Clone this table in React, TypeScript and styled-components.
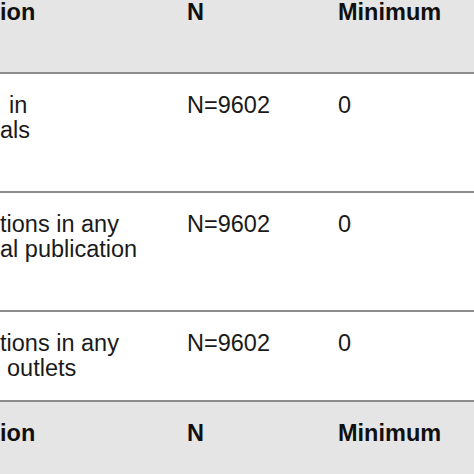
import React from 'react';
import styled, { createGlobalStyle } from 'styled-components';

const GlobalStyle = createGlobalStyle`
  html, body {
    margin: 0;
    padding: 0;
    background: #ffffff;
    overflow: hidden;
  }

  body {
    font-family: 'Liberation Sans', Arial, sans-serif;
    color: #141414;
  }
`;

const Table = styled.div`
  width: 474px;
  height: 474px;
  display: flex;
  flex-direction: column;
  overflow: hidden;
`;

const Row = styled.div<{ $head?: boolean; $height: number }>`
  display: grid;
  grid-template-columns: 187px 151px 1fr;
  box-sizing: border-box;
  height: ${(p) => p.$height}px;
  flex-shrink: 0;
  padding-top: ${(p) => (p.$head ? 0 : 19)}px;
  background: ${(p) => (p.$head ? '#e5e5e5' : '#ffffff')};
  font-size: 23.5px;
  line-height: 25px;
  font-weight: ${(p) => (p.$head ? 700 : 400)};
  color: ${(p) => (p.$head ? '#101010' : '#1a1a1a')};
`;

const Rule = styled.div`
  height: 2px;
  flex-shrink: 0;
  background: #8c8c8c;
`;

const Cell = styled.div`
  display: flex;
  flex-direction: column;
  white-space: nowrap;
`;

const Line = styled.span<{ $indent?: number }>`
  padding-left: ${(p) => p.$indent ?? 0}px;
`;

const rows = [
  { lines: [{ text: 'in', indent: 9 }, { text: 'als', indent: 0 }], height: 117 },
  { lines: [{ text: 'tions in any', indent: 0 }, { text: 'al publication', indent: 0 }], height: 117 },
  { lines: [{ text: 'tions in any', indent: 0 }, { text: 'outlets', indent: 7 }], height: 88 },
];

const Header = ({ height, top }: { height: number; top: number }) => (
  <Row $head $height={height} style={{ paddingTop: top }}>
    <Cell>ion</Cell>
    <Cell>N</Cell>
    <Cell>Minimum</Cell>
  </Row>
);

export default function App() {
  return (
    <>
      <GlobalStyle />
      <Table>
        <Header height={72} top={0} />
        {rows.map((r, i) => (
          <React.Fragment key={i}>
            <Rule />
            <Row $height={r.height}>
              <Cell>
                {r.lines.map((l, j) => (
                  <Line key={j} $indent={l.indent}>
                    {l.text}
                  </Line>
                ))}
              </Cell>
              <Cell>N=9602</Cell>
              <Cell>0</Cell>
            </Row>
          </React.Fragment>
        ))}
        <Rule />
        <Header height={72} top={19} />
      </Table>
    </>
  );
}
